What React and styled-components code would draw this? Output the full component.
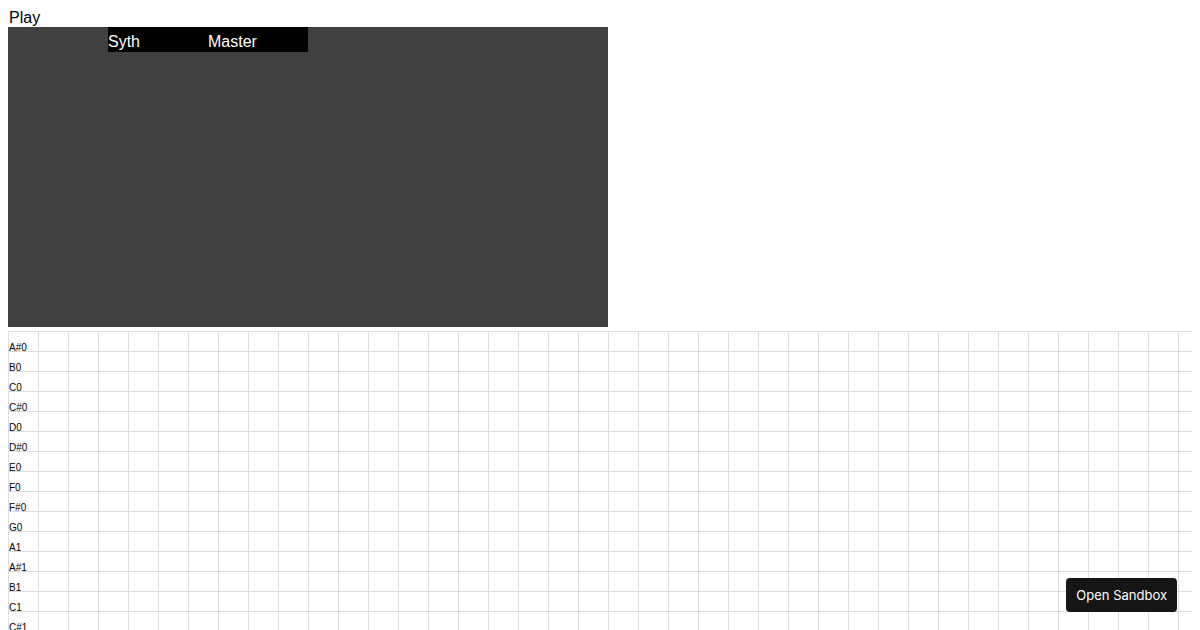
import React from 'react'
import styled, { createGlobalStyle } from 'styled-components'

const GlobalStyle = createGlobalStyle`
  body {
    margin: 8px;
    font-family: "Liberation Sans", Arial, sans-serif;
    font-size: 16px;
    color: #000;
    background: #fff;
  }
`

const notes = [
  'A#0', 'B0', 'C0', 'C#0', 'D0', 'D#0', 'E0', 'F0', 'F#0', 'G0',
  'A1', 'A#1', 'B1', 'C1', 'C#1', 'D1', 'D#1', 'E1'
]

const COLUMNS = 42

function App() {
  return (
    <>
      <GlobalStyle />
      <PlayLabel>Play</PlayLabel>
      <Stage>
        <Tabs>
          <Tab>Syth</Tab>
          <Tab>Master</Tab>
        </Tabs>
      </Stage>
      <Grid>
        {notes.map(note => (
          <Row key={note}>
            <Cell><NoteName>{note}</NoteName></Cell>
            {Array.from({ length: COLUMNS - 1 }).map((_, i) => (
              <Cell key={i} />
            ))}
          </Row>
        ))}
      </Grid>
      <SandboxButton>Open Sandbox</SandboxButton>
    </>
  )
}

export default App

const PlayLabel = styled.div`
  height: 19px;
  line-height: 19px;
  padding-left: 1px;
`
const Stage = styled.div`
  width: 600px;
  height: 300px;
  background-color: #404040;
  margin-bottom: 4px;
`
const Tabs = styled.div`
  display: flex;
  width: 200px;
  margin-left: 100px;
  background-color: #000;
`
const Tab = styled.div`
  box-sizing: border-box;
  width: 100px;
  height: 25px;
  padding-top: 6px;
  line-height: 18px;
  color: #fff;
`
const Grid = styled.div`
  display: flex;
  flex-direction: column;
  width: ${COLUMNS * 30}px;
  border-top: 1px solid #dcdcdc;
  border-left: 1px solid #dcdcdc;
`
const Row = styled.div`
  display: flex;
`
const Cell = styled.div`
  display: flex;
  flex-shrink: 0;
  align-items: flex-end;
  box-sizing: border-box;
  width: 30px;
  height: 20px;
  border-right: 1px solid #dcdcdc;
  border-bottom: 1px solid #dcdcdc;
`
const NoteName = styled.span`
  font-size: 10px;
  line-height: 10px;
  margin-bottom: -2px;
  color: #000;
`
const SandboxButton = styled.button`
  position: fixed;
  right: 23px;
  bottom: 18px;
  height: 34px;
  padding: 0 10px;
  border: none;
  border-radius: 4px;
  background-color: #151515;
  color: #fff;
  font-family: Inter, "Liberation Sans", sans-serif;
  font-size: 13px;
  cursor: pointer;
`
